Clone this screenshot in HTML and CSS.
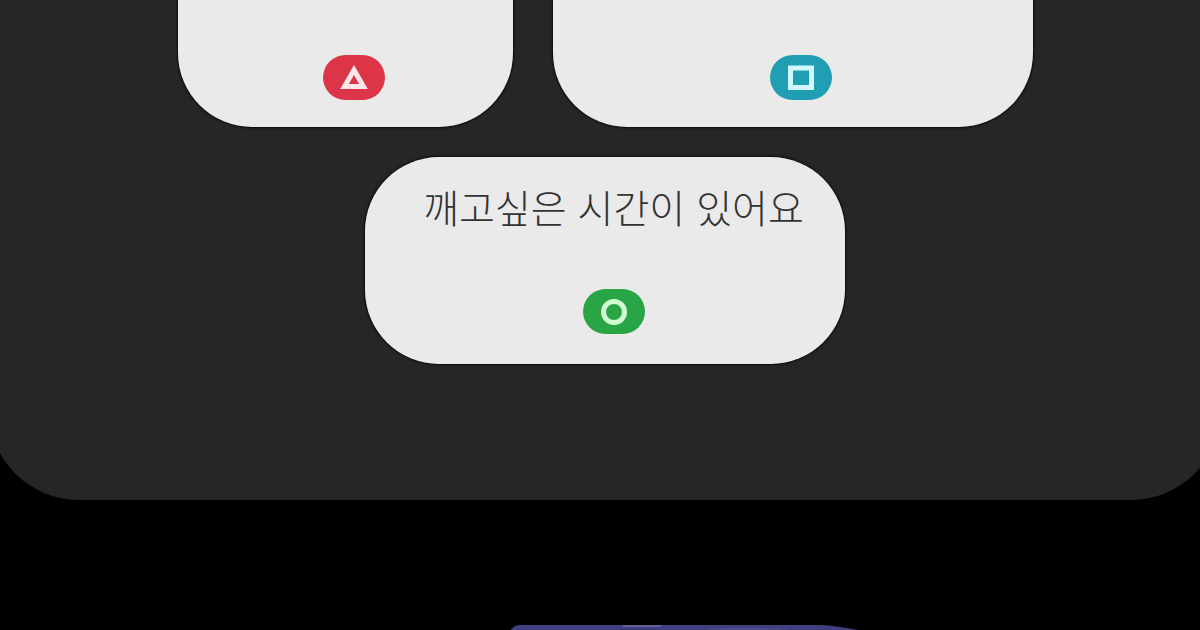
FILE: index.html
```
<!DOCTYPE html>
<html lang="ko">

<head>
    <meta charset="UTF-8">
    <meta name="viewport" content="width=device-width, initial-scale=1.0">
    <title>Document</title>
    <link rel="stylesheet" href="styles.css">
</head>

<body>
    <main class="panel">
        <div class="row">
            <div class="card card-top small">
                <button type="button" class="mark red" aria-label="세모">
                    <svg width="32" height="28" viewBox="0 0 32 28">
                        <path d="M16 6 L25.5 22.5 H6.5 Z" />
                    </svg>
                </button>
            </div>
            <div class="card card-top">
                <button type="button" class="mark blue" aria-label="네모">
                    <svg width="32" height="28" viewBox="0 0 32 28">
                        <rect x="5.5" y="4" width="21" height="19.5" />
                    </svg>
                </button>
            </div>
        </div>
        <div class="row">
            <div class="card">
                <p class="text">깨고싶은 시간이 있어요</p>
                <button type="button" class="mark green" aria-label="동그라미">
                    <svg width="32" height="28" viewBox="0 0 32 28">
                        <circle cx="16" cy="14" r="10.5" />
                    </svg>
                </button>
            </div>
        </div>
    </main>
    <!-- 아래쪽 그림의 윗부분 -->
    <div class="bottom">
        <svg width="400" height="6" viewBox="0 0 400 6">
            <path d="M0 6 L6 1 L10 0 H312 Q330 1 354 6 Z" fill="#403f80" />
            <path d="M180 6 Q220 1 270 4 L290 6 Z" fill="#504d94" />
            <rect x="114" y="0" width="38" height="2" fill="#65609c" />
        </svg>
    </div>
</body>

</html>
```

FILE: styles.css
```
body {
    margin: 0;
    background-color: #000;
    font-family: "Noto Sans CJK KR", sans-serif;
    overflow: hidden;
}

.panel {
    display: flex;
    flex-direction: column;
    gap: 30px;
    margin: 0 -21px 0 -11px;
    padding-bottom: 136px;
    background-color: #262626;
    border-radius: 0 0 90px 90px;
}

.row {
    display: flex;
    justify-content: center;
    gap: 40px;
}

.card {
    box-sizing: border-box;
    display: flex;
    flex-direction: column;
    align-items: center;
    width: 40%;
    max-width: 480px;
    padding: 20px 0 30px 17px;
    background-color: #eaeaea;
    border-radius: 74px;
    box-shadow: 0 0 2px 1px #0c0c0c;
}

.card-top {
    padding-top: 55px;
    padding-bottom: 27px;
    border-radius: 0 0 74px 74px;
}

.small {
    width: 28%;
    max-width: 335px;
}

.text {
    margin: 0 0 54px;
    font-size: 39px;
    font-weight: 300;
    line-height: 58px;
    color: #333;
    white-space: nowrap;
}

.mark {
    display: flex;
    align-items: center;
    justify-content: center;
    width: 62px;
    height: 45px;
    padding: 0;
    border: none;
    border-radius: 24px;
    cursor: pointer;
}

.mark svg {
    fill: none;
    stroke-width: 5px;
}

.red {
    background-color: #dc3548;
    stroke: #ffe6e9;
}

.blue {
    background-color: #209eb3;
    stroke: #d2f8ff;
}

.green {
    background-color: #2aa545;
    stroke: #d0ffd4;
}

.bottom {
    display: flex;
    justify-content: center;
    margin-top: 125px;
    padding-left: 218px;
}
```
